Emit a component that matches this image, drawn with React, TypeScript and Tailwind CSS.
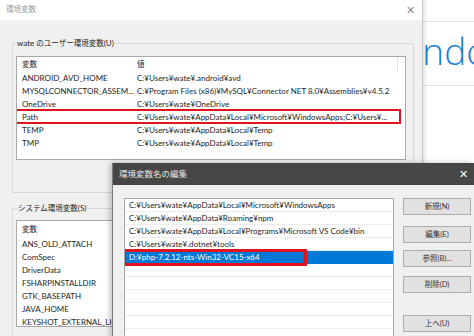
import React from "react";

const userVars: [string, string][] = [
  ["ANDROID_AVD_HOME", "C:¥Users¥wate¥.android¥avd"],
  ["MYSQLCONNECTOR_ASSEM...", "C:¥Program Files (x86)¥MySQL¥Connector NET 8.0¥Assemblies¥v4.5.2"],
  ["OneDrive", "C:¥Users¥wate¥OneDrive"],
  ["Path", "C:¥Users¥wate¥AppData¥Local¥Microsoft¥WindowsApps;C:¥Users¥..."],
  ["TEMP", "C:¥Users¥wate¥AppData¥Local¥Temp"],
  ["TMP", "C:¥Users¥wate¥AppData¥Local¥Temp"],
];

const sysVars = [
  "ANS_OLD_ATTACH",
  "ComSpec",
  "DriverData",
  "FSHARPINSTALLDIR",
  "GTK_BASEPATH",
  "JAVA_HOME",
  "KEYSHOT_EXTERNAL_LIC",
];

const pathItems = [
  "C:¥Users¥wate¥AppData¥Local¥Microsoft¥WindowsApps",
  "C:¥Users¥wate¥AppData¥Roaming¥npm",
  "C:¥Users¥wate¥AppData¥Local¥Programs¥Microsoft VS Code¥bin",
  "C:¥Users¥wate¥.dotnet¥tools",
];

export default function App() {
  return (
    <div className="relative w-[474px] h-[336px] overflow-hidden bg-white font-['Lato','Noto_Sans_CJK_JP',sans-serif] text-[#262626]">
      {/* background window (Windows settings) */}
      <div className="absolute inset-0 bg-white flex flex-col">
        <div className="h-[22px] border-b border-[#e3e3e3]" />
        <div className="h-[64px] border-b border-[#e3e3e3] pl-[381px] pt-[10px] text-[37px] font-light leading-none text-[#1a7fd4] whitespace-nowrap font-['Open_Sans',sans-serif]">
          Windows
        </div>
      </div>

      {/* main dialog: 環境変数 */}
      <div className="relative w-[423px] h-[336px] bg-[#f0f0f0] border-r border-[#c8c8c8] shadow-[2px_0_4px_rgba(0,0,0,0.12)] flex flex-col">
        <div className="h-[20px] shrink-0 bg-white flex items-center justify-between pl-[6px] pr-[7px] text-[7.5px] text-[#9a9a9a]">
          <span>環境変数</span>
          <span className="text-[11px] font-light text-[#8a8a8a]">✕</span>
        </div>

        <div className="pl-[12px] pr-[8px] pt-[17px] flex flex-col">
          <fieldset className="border border-[#d9d9d9] pl-[3px] pr-[7px] pb-[32px]">
            <legend className="ml-[0px] px-[1px] text-[8px] leading-[12px] whitespace-nowrap">
              wate <span className="text-[7.5px]">のユーザー環境変数</span>(U)
            </legend>
            <div className="mt-[6px] h-[104px] bg-white border border-[#a9a9a9] text-[8px] leading-[13px] whitespace-nowrap overflow-hidden">
              <div className="h-[15px] grid grid-cols-[115px_261px_1fr] pl-[5px] items-center">
                <span className="text-[7.5px]">変数</span>
                <span className="text-[7.5px] border-r border-[#e2e2e2] h-[15px] leading-[15px]">値</span>
                <span />
              </div>
              {userVars.map(([k, v]) => (
                <div key={k} className="relative h-[13px] grid grid-cols-[115px_1fr] pl-[5px]">
                  <span className="overflow-hidden">{k}</span>
                  <span className="overflow-hidden">{v}</span>
                  {k === "Path" && (
                    <div className="absolute -left-[2px] -top-[2px] right-[4px] h-[15px] border-2 border-[#e0141e]" />
                  )}
                </div>
              ))}
            </div>
          </fieldset>

          <fieldset className="mt-[9px] border border-[#d9d9d9] pl-[3px] pr-[7px] pb-[12px]">
            <legend className="ml-[1px] px-[1px] text-[7.5px] leading-[12px] whitespace-nowrap">
              システム環境変数<span className="text-[8px]">(S)</span>
            </legend>
            <div className="mt-[5px] h-[107px] bg-white border border-[#a9a9a9] text-[8px] leading-[13px] whitespace-nowrap overflow-hidden">
              <div className="h-[17px] flex items-center pl-[5px]">
                <span className="text-[7.5px]">変数</span>
              </div>
              {sysVars.map((k) => (
                <div key={k} className="h-[13px] pl-[5px]">
                  {k}
                </div>
              ))}
            </div>
          </fieldset>
        </div>
      </div>

      {/* edit dialog: 環境変数名の編集 */}
      <div className="absolute left-[112px] top-[163px] w-[362px] h-[175px] bg-[#f0f0f0] border-l border-[#7a7a7a] shadow-[-2px_0_6px_rgba(0,0,0,0.25)] flex flex-col">
        <div className="h-[22px] shrink-0 bg-[#474747] flex items-center justify-between pl-[6px] pr-[6px] text-[8.5px] text-[#e6e6e6]">
          <span>環境変数名の編集</span>
          <span className="text-[11px] font-light text-white">✕</span>
        </div>
        <div className="flex pl-[11px] pt-[13px] gap-[9px]">
          <div className="w-[270px] h-[150px] bg-white border border-[#a9a9a9] text-[8px] leading-[12px] whitespace-nowrap overflow-hidden">
            {pathItems.map((p) => (
              <div key={p} className="h-[13px] border-b border-[#ececec] pl-[4px]">
                {p}
              </div>
            ))}
            <div className="relative h-[13px] bg-[#0078d7] text-white pl-[4px]">
              D:¥php-7.2.12-nts-Win32-VC15-x64
              <div className="absolute -left-[2px] -top-[2px] w-[184px] h-[17px] border-[3px] border-[#e0141e]" />
            </div>
            {Array.from({ length: 7 }).map((_, i) => (
              <div key={i} className="h-[13px] border-b border-[#ececec]" />
            ))}
          </div>
          <div className="flex flex-col w-[68px] text-[7.5px] text-[#333]">
            <div className="h-[17px] flex items-center justify-center bg-[#e1e1e1] border border-[#adadad]">新規(N)</div>
            <div className="mt-[11px] h-[17px] flex items-center justify-center bg-[#e1e1e1] border border-[#adadad]">編集(E)</div>
            <div className="mt-[7px] h-[17px] flex items-center justify-center bg-[#e1e1e1] border border-[#adadad]">参照(B)...</div>
            <div className="mt-[9px] h-[17px] flex items-center justify-center bg-[#e1e1e1] border border-[#adadad]">削除(D)</div>
            <div className="mt-[22px] h-[17px] flex items-center justify-center bg-[#e1e1e1] border border-[#adadad]">上へ(U)</div>
          </div>
        </div>
      </div>
    </div>
  );
}
